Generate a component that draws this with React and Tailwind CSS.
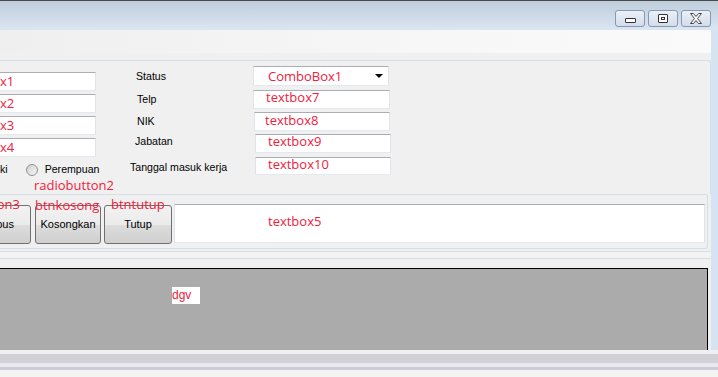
import React from 'react';

const red = "font-['Open_Sans',sans-serif] text-[13px] leading-[17px] text-[#f0203c] whitespace-nowrap";
const label = "font-['Liberation_Sans',Arial,sans-serif] text-[10.6px] leading-[13px] text-black whitespace-nowrap";
const box = 'bg-white border border-t-[#abadb3] border-x-[#e2e3ea] border-b-[#e3e9ef]';

const TitleButton = ({ children }) => (
    <div className="w-[30px] h-[17px] rounded-[3px] border border-[#8798b2] bg-gradient-to-b from-[#eaf0f7] to-[#d3dde9] flex items-center justify-center">
        {children}
    </div>
);

const WinButton = ({ text, className = '' }) => (
    <div className={`h-[39px] rounded-[3px] border border-[#707070] bg-[linear-gradient(#f2f2f2_0%,#ebebeb_50%,#dddddd_51%,#cfcfcf_100%)] flex items-center justify-center ${label} text-[11px] ${className}`}>
        {text}
    </div>
);

const FieldRow = ({ name, labelClass = '', boxClass = '', children }) => (
    <div className="flex items-center">
        <div className={`w-[123px] ${label} ${labelClass}`}>{name}</div>
        <div className={`${box} w-[136px] ${boxClass}`}>{children}</div>
    </div>
);

export default function App() {
    return (
        <div className="w-[718px] h-[377px] overflow-hidden flex flex-col bg-[#f0f0f0]">
            {/* title bar */}
            <div className="h-[30px] shrink-0 border-t border-[#4a4a4a] bg-gradient-to-b from-[#bfcddb] to-[#dbe6f2] flex justify-end items-start pt-[9px] pr-[7px] gap-[3px]">
                <TitleButton>
                    <div className="w-[11px] h-[5px] mt-[4px] border border-[#333] rounded-[1px] bg-white" />
                </TitleButton>
                <TitleButton>
                    <div className="w-[10px] h-[9px] border border-[#333] rounded-[1px] bg-white flex items-center justify-center">
                        <div className="w-[4px] h-[3px] border border-[#333]" />
                    </div>
                </TitleButton>
                <TitleButton>
                    <svg width="14" height="11" viewBox="0 0 14 11">
                        <path d="M1.5 0.5h3l2.5 3 2.5-3h3l-4 5 4 5h-3l-2.5-3-2.5 3h-3l4-5z" fill="#fff" stroke="#444" strokeWidth="1" strokeLinejoin="round" />
                    </svg>
                </TitleButton>
            </div>

            <div className="flex flex-1 min-h-0">
                <div className="w-[711px] flex flex-col">
                    {/* tool strip */}
                    <div className="h-[23px] shrink-0 bg-gradient-to-r from-[#efefef] via-[#f6f6f6] to-[#fafafa]" />
                    <div className="h-[7px] shrink-0" />

                    {/* group 1 */}
                    <div className="h-[134px] shrink-0 border-t border-r border-[#d5dfe5] rounded-tr-[3px] flex">
                        <div className="w-[96px] shrink-0 flex flex-col pt-[11px]">
                            {['x1', 'x2', 'x3', 'x4'].map((t, i) => (
                                <div key={t} className={`${box} h-[19px] border-l-0 ${i ? 'mt-[3px]' : ''}`}>
                                    <div className={red}>{t}</div>
                                </div>
                            ))}
                            <div className="flex items-center mt-[6px] h-[13px]">
                                <span className={label}>ki</span>
                                <div className="ml-[18px] shrink-0 w-[12px] h-[12px] rounded-full border border-[#8e8f8f] bg-gradient-to-br from-[#d0d0d0] to-[#f6f6f6]" />
                                <span className={`${label} ml-[7px]`}>Perempuan</span>
                            </div>
                            <div className={`${red} ml-[34px] mt-[1px]`}>radiobutton2</div>
                        </div>

                        <div className="ml-[34px] flex flex-col pt-[5px]">
                            <FieldRow name="Status" labelClass="pl-[6px]" boxClass="h-[20px] border-[#dcdcdc] rounded-[1px]">
                                <div className="flex items-center h-full pl-[14px] pr-[5px]">
                                    <span className={`${red} flex-1`}>ComboBox1</span>
                                    <svg width="8" height="4" viewBox="0 0 8 4"><path d="M0 0h8L4 4z" fill="#000" /></svg>
                                </div>
                            </FieldRow>
                            <div className="mt-[4px]">
                                <FieldRow name="Telp" labelClass="pl-[7px]" boxClass="h-[19px] w-[137px]">
                                    <div className={`${red} pl-[12px] -mt-[2px]`}>textbox7</div>
                                </FieldRow>
                            </div>
                            <div className="mt-[3px]">
                                <FieldRow name="NIK" labelClass="pl-[7px]" boxClass="h-[19px] ml-[1px]">
                                    <div className={`${red} pl-[10px] -mt-[1px]`}>textbox8</div>
                                </FieldRow>
                            </div>
                            <div className="mt-[3px]">
                                <FieldRow name="Jabatan" labelClass="pl-[5px] mb-[5px]" boxClass="h-[19px] w-[135px] ml-[2px]">
                                    <div className={`${red} pl-[12px] -mt-[2px]`}>textbox9</div>
                                </FieldRow>
                            </div>
                            <div className="mt-[4px]">
                                <FieldRow name="Tanggal masuk kerja" labelClass="mt-[2px]" boxClass="h-[18px] w-[135px] ml-[2px]">
                                    <div className={`${red} pl-[12px] -mt-[2px]`}>textbox10</div>
                                </FieldRow>
                            </div>
                        </div>
                    </div>

                    {/* group 2 */}
                    <div className="h-[55px] shrink-0 mr-[3px] border border-l-0 border-[#d5dfe5] rounded-r-[3px] flex items-start pt-[10px]">
                        <div className="relative">
                            <WinButton text="Hapus" className="w-[66px] -ml-[35px]" />
                            <div className={`${red} absolute -left-[35px] -top-[9px] w-[55px] text-right`}>on3</div>
                        </div>
                        <div className="relative ml-[4px]">
                            <WinButton text="Kosongkan" className="w-[66px]" />
                            <div className={`${red} absolute left-0 -top-[8px]`}>btnkosong</div>
                        </div>
                        <div className="relative ml-[3px]">
                            <WinButton text="Tutup" className="w-[68px]" />
                            <div className={`${red} absolute left-[7px] -top-[9px]`}>btntutup</div>
                        </div>
                        <div className={`${box} ml-[2px] -mt-[1px] w-[531px] h-[39px] border-t-[#a8a8a8] flex items-center pl-[93px]`}>
                            <span className={`${red} -mt-[4px]`}>textbox5</span>
                        </div>
                    </div>

                    {/* separators */}
                    <div className="h-[2px] shrink-0" />
                    <div className="h-[8px] shrink-0 border-t border-b border-[#d5dfe5] bg-[#f3f3f3] rounded-r-[2px]" />
                    <div className="h-[9px] shrink-0" />

                    {/* data grid */}
                    <div className="flex-1 mr-[3px] border-t border-r border-black bg-[#ababab] pl-[172px] pt-[18px]">
                        <div className="w-[28px] h-[17px] bg-white font-['Liberation_Sans',Arial,sans-serif] text-[12px] leading-[16px] text-[#f0203c]">dgv</div>
                    </div>
                </div>
                <div className="w-[7px] bg-[#d6e3f1]" />
            </div>

            {/* bottom bands */}
            <div className="h-[27px] shrink-0 flex flex-col">
                <div className="h-[4px] bg-[#f0f0f0]" />
                <div className="h-[9px] bg-[#d0d0d6]" />
                <div className="h-[4px] bg-[#e9e9ed]" />
                <div className="h-[3px] bg-[#ccccd9]" />
                <div className="flex-1 bg-[#f4f4f4]" />
            </div>
        </div>
    );
}
